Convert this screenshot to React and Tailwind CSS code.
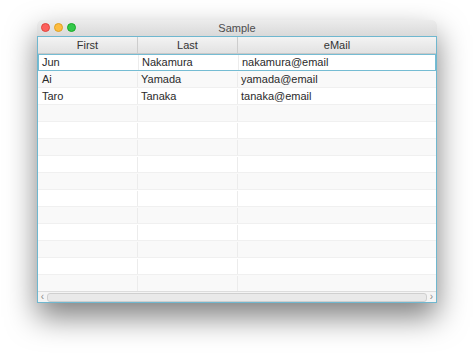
import React from 'react';

// Données de la table
const people = [
  { first: 'Jun', last: 'Nakamura', email: 'nakamura@email' },
  { first: 'Ai', last: 'Yamada', email: 'yamada@email' },
  { first: 'Taro', last: 'Tanaka', email: 'tanaka@email' },
];

const EMPTY_ROWS = 11;

function Row({ person, index }) {
  const selected = index === 0;
  const bg = index % 2 === 0 ? 'bg-white' : 'bg-[#f9f9f9]';
  return (
    <div
      className={`grid grid-cols-[100px_100px_1fr] h-[17px] shrink-0 text-[11px] text-[#2a2a2a] leading-[15px] ${bg} ${
        selected ? 'border border-[#75bcd3]' : 'border-y border-t-transparent border-b-[#f0f0f0]'
      }`}
    >
      <div className={`border-r border-[#ececec] ${selected ? 'pl-[3px]' : 'pl-[4px]'}`}>{person?.first}</div>
      <div className="pl-[3px] border-r border-[#ececec]">{person?.last}</div>
      <div className="pl-[3px]">{person?.email}</div>
    </div>
  );
}

export default function App() {
  const rows = [...people, ...Array(EMPTY_ROWS).fill(null)];

  return (
    <div
      className="w-[474px] h-[355px] bg-white overflow-hidden pt-[20px] pl-[37px]"
      style={{ fontFamily: '"Liberation Sans", Arial, sans-serif' }}
    >
      <div className="w-[400px] h-[283px] flex flex-col rounded-t-[5px] overflow-hidden shadow-[0_14px_30px_rgba(0,0,0,0.5)] bg-white">
        {/* Barre de titre */}
        <div className="relative h-[16px] shrink-0 bg-gradient-to-b from-[#ececec] to-[#d9d9d9] flex items-center justify-center">
          <div className="absolute left-[4px] top-[3px] flex gap-[4px]">
            <span className="w-[9px] h-[9px] rounded-full bg-[#fc605c] border border-[#e0443e]" />
            <span className="w-[9px] h-[9px] rounded-full bg-[#fdbc40] border border-[#dea123]" />
            <span className="w-[9px] h-[9px] rounded-full bg-[#34c84a] border border-[#1aab29]" />
          </div>
          <span className="text-[11px] text-[#4d4d4d] leading-none">Sample</span>
        </div>

        {/* Table */}
        <div className="flex-1 flex flex-col border border-[#6fb7cf] overflow-hidden">
          <div className="grid grid-cols-[100px_100px_1fr] h-[17px] shrink-0 bg-gradient-to-b from-[#f3f3f3] to-[#e2e2e2] border-b border-[#c8c8c8] text-[11px] text-[#333] leading-[16px]">
            <div className="text-center border-r border-[#cdcdcd]">First</div>
            <div className="text-center border-r border-[#cdcdcd]">Last</div>
            <div className="text-center">eMail</div>
          </div>

          <div className="flex-1 flex flex-col overflow-hidden">
            {rows.map((p, i) => (
              <Row key={i} person={p} index={i} />
            ))}
          </div>

          {/* Barre de défilement horizontale */}
          <div className="h-[11px] shrink-0 flex items-center bg-[#f4f4f4] border-t border-[#dcdcdc]">
            <span className="w-[9px] text-[10px] leading-none text-[#888] text-center">‹</span>
            <div className="flex-1 h-[9px] rounded-[3px] bg-[#e9e9e9] border border-[#cfcfcf]" />
            <span className="w-[9px] text-[10px] leading-none text-[#888] text-center">›</span>
          </div>
        </div>
      </div>
    </div>
  );
}
